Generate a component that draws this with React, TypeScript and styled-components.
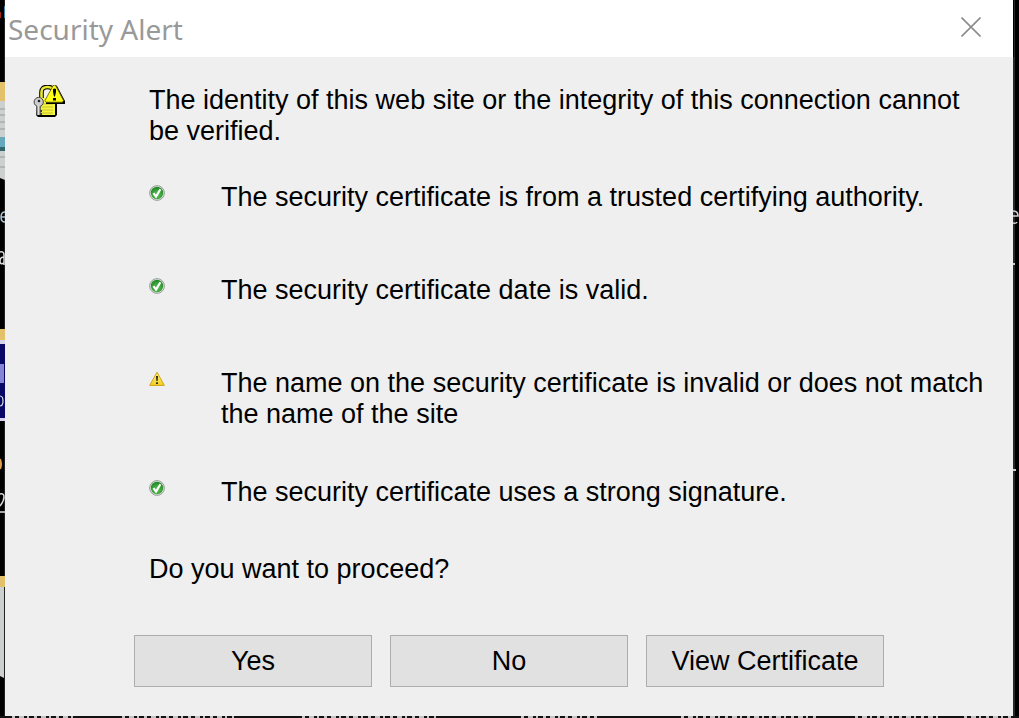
import React from "react";
import styled, { createGlobalStyle } from "styled-components";

const GlobalStyle = createGlobalStyle`
  *, *::before, *::after { box-sizing: border-box; }
  body {
    margin: 0;
    background: #000;
    font-family: "Liberation Sans", Arial, sans-serif;
  }
`;

const Desktop = styled.div`
  display: grid;
  grid-template-columns: 5px minmax(0, 1fr) 6px;
  grid-template-rows: 1fr 2px;
  min-height: 100vh;
  overflow: hidden;
  background: #000;
`;

const Edge = styled.svg`
  display: block;
  width: 100%;
  height: 100%;
`;

const BottomEdge = styled(Edge)`
  grid-column: 1 / -1;
  height: 2px;
`;

const Dialog = styled.section`
  display: flex;
  flex-direction: column;
  background: #efefef;
  color: #000;
`;

const TitleBar = styled.header`
  display: flex;
  align-items: flex-start;
  justify-content: space-between;
  height: 57px;
  padding: 9px 24px 0 3px;
  background: #fff;
`;

const Title = styled.h1`
  margin: 0;
  font: 400 28px/40px "Noto Sans", "Open Sans", sans-serif;
  color: #999;
`;

const CloseButton = styled.button`
  display: flex;
  padding: 8px;
  border: 0;
  background: none;
  color: #8c8c8c;
`;

const Body = styled.div`
  display: grid;
  grid-template-columns: 116px minmax(0, 1fr);
  padding: 28px 24px 0 28px;
  font-size: 27px;
  line-height: 31px;
`;

const Message = styled.p`
  margin: 0;
`;

const Checks = styled.ul`
  display: flex;
  flex-direction: column;
  margin: 0;
  padding: 35px 0 46px;
  list-style: none;
`;

const Check = styled.li<{ $gap: number }>`
  display: grid;
  grid-template-columns: 72px minmax(0, 1fr);
  align-items: start;
  margin-top: ${(p) => p.$gap}px;
`;

const Actions = styled.footer`
  display: flex;
  gap: 18px;
  padding: 50px 129px 29px;
`;

const ActionButton = styled.button`
  flex: 1;
  height: 52px;
  padding: 0;
  border: 1px solid #adadad;
  background: #e1e1e1;
  color: #000;
  font: 400 27px/31px "Liberation Sans", Arial, sans-serif;
`;

const StatusIcon = styled.svg`
  display: block;
  width: 16px;
  height: 16px;
  margin-top: 3px;
`;

function ValidIcon() {
  return (
    <StatusIcon viewBox="0 0 16 16" role="img" aria-label="Valid">
      <defs>
        <radialGradient id="ok" cx="50%" cy="65%" r="60%">
          <stop offset="0" stopColor="#5fc755" />
          <stop offset="1" stopColor="#238a28" />
        </radialGradient>
      </defs>
      <circle cx="8" cy="8" r="7.4" fill="#dfe4df" stroke="#8d968d" strokeWidth="0.9" />
      <circle cx="8" cy="8" r="6.2" fill="url(#ok)" />
      <path d="M4.4 8.2 7 11.6 11.4 4.2" fill="none" stroke="#fff" strokeWidth="2.2" />
    </StatusIcon>
  );
}

function WarningIcon() {
  return (
    <StatusIcon viewBox="0 0 16 16" role="img" aria-label="Warning">
      <defs>
        <linearGradient id="warn" x1="0" y1="0" x2="0" y2="1">
          <stop offset="0" stopColor="#fff27a" />
          <stop offset="1" stopColor="#f2d024" />
        </linearGradient>
      </defs>
      <path d="M8 1.2 15.3 14.4H.7Z" fill="url(#warn)" stroke="#d0a116" strokeLinejoin="round" />
      <path d="M7 5h2l-.4 5H7.4ZM7.1 11.2h1.8V13H7.1Z" fill="#222" />
    </StatusIcon>
  );
}

function PadlockIcon() {
  return (
    <svg width="34" height="34" viewBox="0 1 34 34" role="img" aria-label="Security warning">
      <path d="M8.5 16V8q0-5 6-5T20 8v8" fill="none" stroke="#000" strokeWidth="4.6" />
      <path d="M8.5 16V8q0-5 6-5T20 8v8" fill="none" stroke="#e8e82c" strokeWidth="2.6" />
      <path d="M5 14h17l2 1v16l-2 2H5l-2-2Z" fill="#000" />
      <path d="M4 14h18v17H4Z" fill="#f4f43c" />
      <path d="M8 20h12M8 23h12M8 26h12M8 29h12" stroke="#c5c238" />
      <path d="M21 2q1-2 3 0l8 15v3H13v-2Z" fill="#000" />
      <path d="M20 1.8q1.3-1.5 2.8 0L30.5 16.5l-1 1.7H13l-1-1.7Z" fill="#ffff16" stroke="#545400" strokeWidth="0.8" />
      <path d="M20 5q1.5-1 3 0v3l-1 4.5h-1L20 8ZM20 14h3v2.5h-3Z" fill="#000" />
      <path d="M5.5 20v11" stroke="#444" strokeWidth="4.5" />
      <path d="M6 30h3M6 27h3" stroke="#444" strokeWidth="2" />
      <circle cx="5.7" cy="18" r="4.6" fill="#ccc" stroke="#444" />
      <circle cx="6" cy="17" r="1.3" fill="#222" />
      <path d="M5.5 21v10" stroke="#ddd" strokeWidth="2.2" />
    </svg>
  );
}

function LeftEdge() {
  return (
    <Edge viewBox="0 0 5 716" preserveAspectRatio="xMinYMin slice" aria-hidden="true">
      <path d="M4 0h1v716H4Z" fill="#222" />
      <path d="M0 12h1v6H0Z" fill="#a32a16" />
      <path d="M4 6h1v12H4Z" fill="#4387b5" />
      <path d="M0 82h5v19H0ZM0 329h5v11H0ZM0 576h5v11H0Z" fill="#e3c16b" />
      <path d="M0 101h5v79l-5-2ZM0 587h4v91l-4-2Z" fill="#ccd1cf" />
      <path d="M0 109h5M0 115h5M0 122h5M0 129h5M0 157h5M0 167h5" stroke="#999d98" />
      <path d="M0 137h5v11H0Z" fill="#68a8bd" />
      <path d="M0 147h5v4H0Z" fill="#34666d" />
      <path d="M0 340h5v80H0Z" fill="#080866" />
      <path d="M0 340h5v4H0ZM0 418h5v3H0Z" fill="#d5d4ea" />
      <path d="M0 364h4v19H0Z" fill="#8784d5" />
      <path d="M5 212q-4 0-4 5t4 5M1 217h4" fill="none" stroke="#abc4d2" strokeWidth="1.5" />
      <path d="M0 252q4-1 4 3v10M4 257q-4 0-4 4t4 2" fill="none" stroke="#ddd" strokeWidth="1.5" />
      <path d="M0 396q3 0 3 5t-3 5" fill="none" stroke="#ddd" strokeWidth="1.2" />
      <path d="M0 459q2 5 0 10" fill="none" stroke="#df9e50" strokeWidth="2" />
      <path d="M0 494q4-1 4 3t-4 9M0 512h5" fill="none" stroke="#ddd" strokeWidth="1.5" />
    </Edge>
  );
}

function RightEdge() {
  return (
    <Edge viewBox="0 0 6 716" preserveAspectRatio="xMinYMin slice" aria-hidden="true">
      <path d="M0 57h2v659H0Z" fill="#292929" />
      <path d="M1 0h1v57H1Z" fill="#292929" />
      <path d="M0 211q5 0 5 5H0M0 223q3 1 4-1" fill="none" stroke="#d8cfd7" strokeWidth="1.5" />
      <path d="M0 263h2v2H0ZM0 469h3v2H0Z" fill="#ccc" />
    </Edge>
  );
}

const slivers: Array<[number, number]> = [
  [12, 64],
  [122, 112],
  [302, 134],
  [521, 76],
  [681, 136],
  [855, 86],
  [964, 50],
];

function LowerEdge() {
  return (
    <BottomEdge aria-hidden="true">
      <rect width="100%" height="2" fill="#111" />
      {slivers.map(([x, w]) => (
        <path key={x} d={`M${x} 1h${w}`} stroke="#c4c4c4" strokeWidth="2" strokeDasharray="3 4 5 3 2 5" />
      ))}
    </BottomEdge>
  );
}

const checks = [
  { ok: true, gap: 0, text: "The security certificate is from a trusted certifying authority." },
  { ok: true, gap: 62, text: "The security certificate date is valid." },
  { ok: false, gap: 62, text: "The name on the security certificate is invalid or does not match the name of the site" },
  { ok: true, gap: 47, text: "The security certificate uses a strong signature." },
];

export default function App() {
  return (
    <>
      <GlobalStyle />
      <Desktop>
        <LeftEdge />
        <Dialog role="alertdialog" aria-labelledby="title">
          <TitleBar>
            <Title id="title">Security Alert</Title>
            <CloseButton type="button" aria-label="Close">
              <svg width="20" height="20" viewBox="0 0 20 20" aria-hidden="true">
                <path d="M.5.5l19 19M19.5.5l-19 19" stroke="currentColor" strokeWidth="1.6" />
              </svg>
            </CloseButton>
          </TitleBar>
          <Body>
            <PadlockIcon />
            <div>
              <Message>
                The identity of this web site or the integrity of this connection cannot be verified.
              </Message>
              <Checks>
                {checks.map((c) => (
                  <Check key={c.text} $gap={c.gap}>
                    {c.ok ? <ValidIcon /> : <WarningIcon />}
                    <span>{c.text}</span>
                  </Check>
                ))}
              </Checks>
              <Message>Do you want to proceed?</Message>
            </div>
          </Body>
          <Actions>
            <ActionButton type="button">Yes</ActionButton>
            <ActionButton type="button">No</ActionButton>
            <ActionButton type="button">View Certificate</ActionButton>
          </Actions>
        </Dialog>
        <RightEdge />
        <LowerEdge />
      </Desktop>
    </>
  );
}
